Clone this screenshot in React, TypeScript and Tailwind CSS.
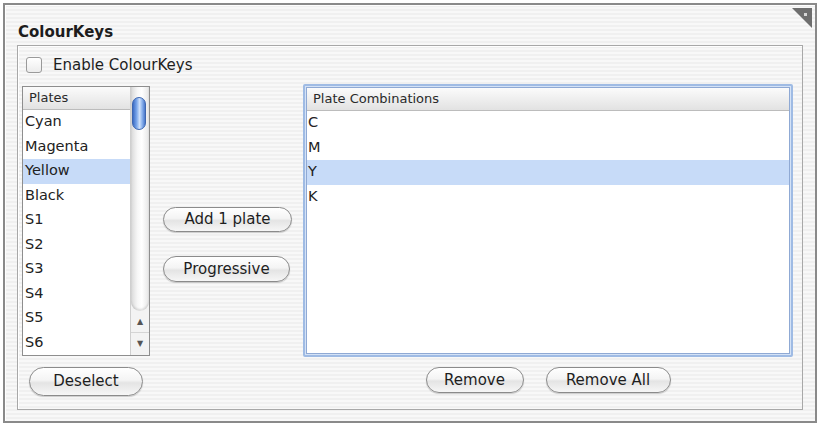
import React from 'react';

const stripes =
  'bg-[repeating-linear-gradient(180deg,#f0f0f0_0px,#f0f0f0_2px,#f8f8f8_2px,#f8f8f8_4px)]';

const plates = ['Cyan', 'Magenta', 'Yellow', 'Black', 'S1', 'S2', 'S3', 'S4', 'S5', 'S6'];
const combos = ['C', 'M', 'Y', 'K'];

function AquaButton({ label, className }: { label: string; className: string }) {
  return (
    <button
      className={`flex items-center justify-center rounded-full border border-[#8b8b8b] bg-[linear-gradient(180deg,#ffffff_0%,#f4f4f4_45%,#e4e4e4_55%,#f6f6f6_100%)] shadow-[0_1px_1px_rgba(0,0,0,0.18)] text-[15px] leading-none text-[#1e1e1e] ${className}`}
    >
      {label}
    </button>
  );
}

function ListHeader({ label }: { label: string }) {
  return (
    <div className="h-[23px] flex items-center pl-[6px] border-b border-[#bcbcbc] bg-[linear-gradient(180deg,#fbfbfb,#e2e2e2)] text-[13px] text-[#2a2a2a]">
      {label}
    </div>
  );
}

function Row({ label, selected, pad }: { label: string; selected?: boolean; pad: string }) {
  return (
    <div
      className={`h-[24.5px] flex items-center ${pad} text-[14.5px] text-[#222] ${selected ? 'bg-[#c7dbf8]' : ''}`}
    >
      {label}
    </div>
  );
}

function Scrollbar() {
  return (
    <div className="w-[19px] h-full flex flex-col border-l border-[#cfcfcf] bg-[#f3f3f3]">
      {/* track */}
      <div className="flex-1 relative rounded-b-full bg-[linear-gradient(90deg,#d9d9d9,#f6f6f6_35%,#ffffff_60%,#e6e6e6)] shadow-[inset_0_-2px_2px_rgba(0,0,0,0.12)]">
        <div className="absolute left-[1px] top-[10px] w-[14px] h-[33px] rounded-full border border-[#3d66b0] bg-[linear-gradient(90deg,#3c6cc4,#7aa6ea_30%,#cfe1fb_55%,#8db4ee_75%,#4a78cc)]" />
      </div>
      {/* arrows */}
      <div className="h-[22px] flex items-center justify-center text-[8px] text-[#555] border-b border-[#d5d5d5]">
        ▲
      </div>
      <div className="h-[22px] flex items-center justify-center text-[8px] text-[#555]">▼</div>
    </div>
  );
}

export default function App() {
  return (
    <div className="w-[821px] h-[428px] bg-white font-['DejaVu_Sans',sans-serif] pt-[3px] pl-[3px]">
      <div
        className={`relative w-[814px] h-[420px] border-2 border-[#8a8a8a] shadow-[inset_1px_1px_0_#ffffff] ${stripes}`}
      >
        {/* corner grip */}
        <svg className="absolute top-[3px] right-[3px]" width="20" height="20" viewBox="0 0 20 20">
          <polygon points="0,0 20,0 20,20" fill="#6e6e6e" />
          <rect x="12" y="5" width="3" height="3" fill="#d6d6d6" />
        </svg>

        {/* title */}
        <div className="h-[40px] pt-[18px] pl-[13px] text-[15px] leading-[18px] font-bold text-[#1c1c1c]">
          ColourKeys
        </div>

        {/* group box */}
        <div
          className={`ml-[12px] w-[786px] h-[365px] border border-[#a8a8a8] shadow-[inset_1px_1px_0_#ffffff] ${stripes}`}
        >
          {/* checkbox row */}
          <div className="mt-[11px] ml-[8px] h-[16px] flex items-center">
            <div className="w-[16px] h-[16px] rounded-[3px] border border-[#9a9a9a] bg-[linear-gradient(180deg,#ffffff,#ececec)]" />
            <span className="ml-[11px] text-[15px] text-[#1e1e1e]">Enable ColourKeys</span>
          </div>

          {/* main row */}
          <div className="mt-[13px] flex items-start">
            {/* plates column */}
            <div className="ml-[4px] w-[128px] flex flex-col items-center">
              <div className="w-[128px] h-[270px] border border-[#8e8e8e] bg-white flex">
                <div className="flex-1">
                  <ListHeader label="Plates" />
                  {plates.map((p) => (
                    <Row key={p} label={p} selected={p === 'Yellow'} pad="pl-[2px]" />
                  ))}
                </div>
                <Scrollbar />
              </div>
              <AquaButton label="Deselect" className="mt-[11px] w-[114px] h-[29px]" />
            </div>

            {/* middle buttons */}
            <div className="w-[153px] pl-[13px] pt-[121px] flex flex-col">
              <AquaButton label="Add 1 plate" className="w-[129px] h-[25px]" />
              <AquaButton label="Progressive" className="mt-[24px] w-[127px] h-[26px]" />
            </div>

            {/* combinations column */}
            <div className="-mt-[2px] w-[490px] flex flex-col items-center">
              <div className="w-[490px] h-[273px] rounded-[2px] border-2 border-[#9fbbe4] p-px bg-[#d4e2f6]">
                <div className="w-full h-full border border-[#8fa9d4] bg-white overflow-hidden">
                  <ListHeader label="Plate Combinations" />
                  {combos.map((c) => (
                    <Row key={c} label={c} selected={c === 'Y'} pad="pl-[1px]" />
                  ))}
                </div>
              </div>
              <div className="mt-[10px] flex gap-[22px]">
                <AquaButton label="Remove" className="w-[98px] h-[26px]" />
                <AquaButton label="Remove All" className="w-[125px] h-[26px]" />
              </div>
            </div>
          </div>
        </div>
      </div>
    </div>
  );
}
